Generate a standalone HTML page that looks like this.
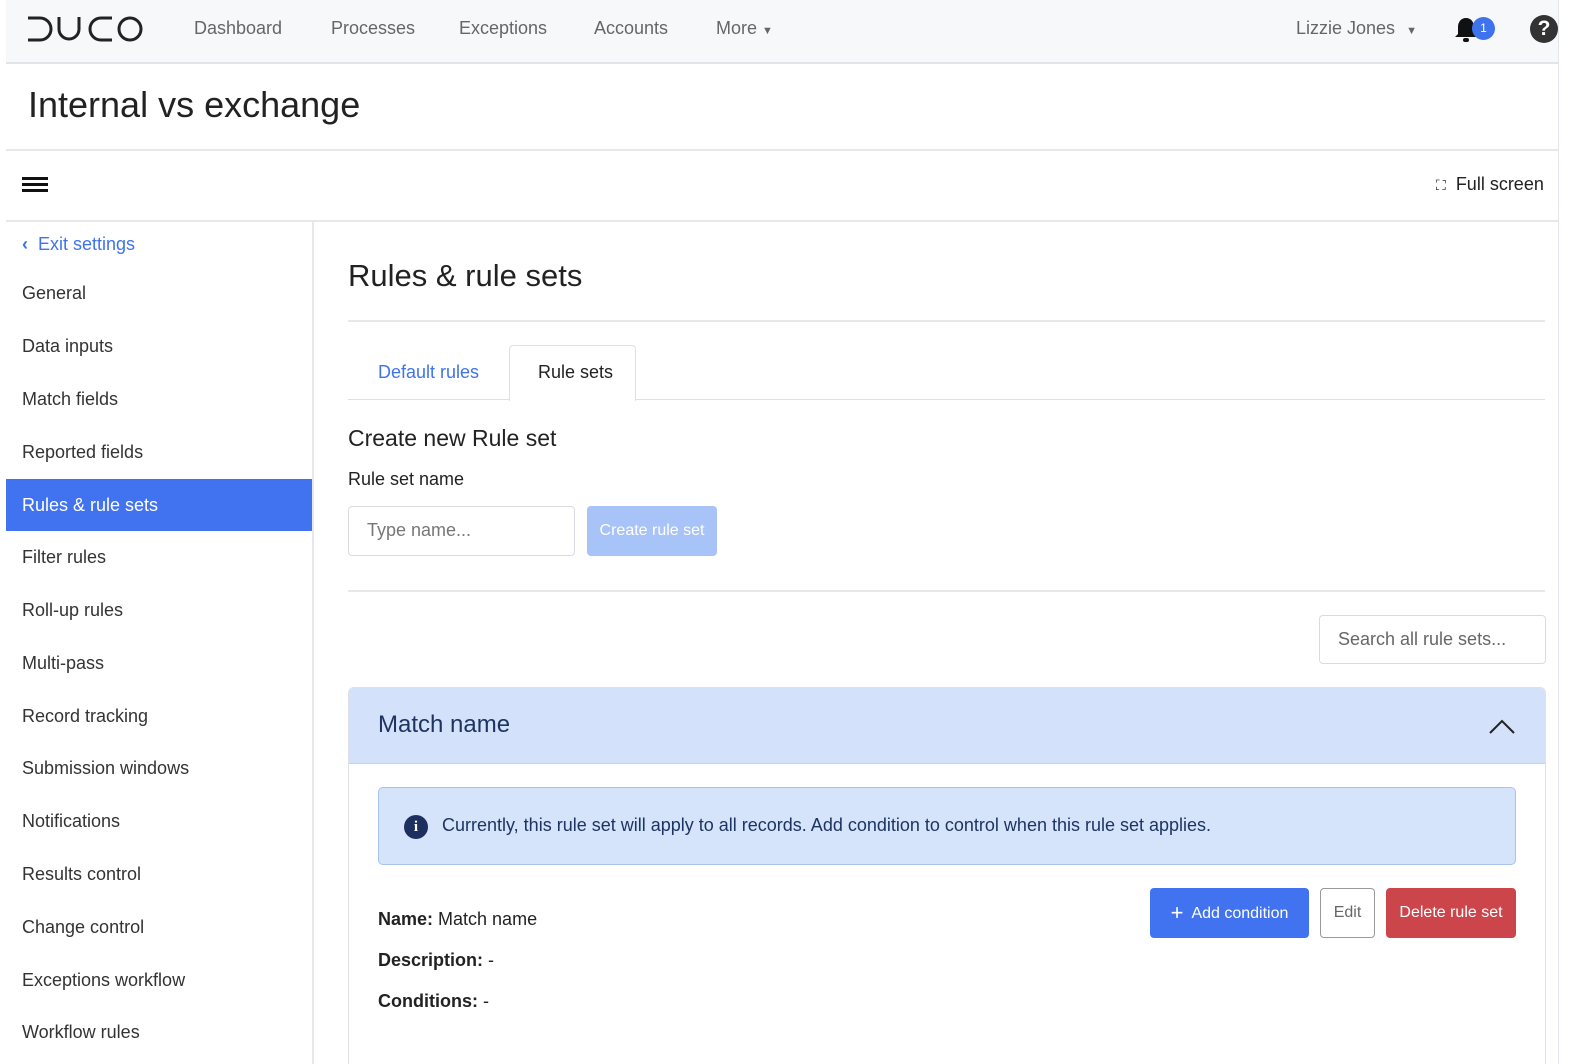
<!DOCTYPE html>
<html><head><meta charset="utf-8"><style>
*{box-sizing:border-box;margin:0;padding:0}
body{width:1574px;height:1064px;overflow:hidden;background:#fff;font-family:"Liberation Sans",sans-serif;color:#333;position:relative}
.a{position:absolute;white-space:nowrap}
.wrap{position:absolute;left:6px;top:0;width:1553px;height:1064px;border-right:1px solid #e3e6ea}
.nav{position:absolute;left:6px;top:0;width:1552px;height:64px;background:#f7f8fa;border-bottom:2px solid #e1e5eb}
.nav .l{position:absolute;top:18px;font-size:18px;color:#666}
.side div.i{position:absolute;left:22px;font-size:18px;color:#333}
.btn{position:absolute;border-radius:4px;font-size:16px;text-align:center;color:#fff}
</style></head><body>
<div class="wrap"></div>
<div class="nav">
 <svg class="a" style="left:20px;top:16px" width="118" height="26" viewBox="0 0 118 26" fill="none" stroke="#222" stroke-width="3">
  <path d="M2 2h12a11 11 0 0 1 0 22H2"/>
  <path d="M33 1v12a10 10 0 0 0 20 0V1"/>
  <path d="M86 2H75a11 11 0 0 0 0 22h11"/>
  <circle cx="104" cy="13" r="11"/>
 </svg>
 <div class="l" style="left:188px">Dashboard</div>
 <div class="l" style="left:325px">Processes</div>
 <div class="l" style="left:453px">Exceptions</div>
 <div class="l" style="left:588px">Accounts</div>
 <div class="l" style="left:710px">More <span style="font-size:11px">▼</span></div>
 <div class="l" style="left:1290px">Lizzie Jones <span style="font-size:11px;margin-left:6px">▼</span></div>
 <svg class="a" style="left:1448px;top:16px" width="24" height="28" viewBox="0 0 24 28"><path d="M12 2c-5 0-8 4-8 9v7l-3 3h22l-3-3v-7c0-5-3-9-8-9z" fill="#111"/><rect x="9" y="22" width="6" height="4" rx="2" fill="#111"/></svg>
 <div class="a" style="left:1466px;top:17px;width:23px;height:23px;border-radius:50%;background:#3f73ee;color:#fff;font-size:12px;text-align:center;line-height:23px">1</div>
 <div class="a" style="left:1524px;top:15px;width:28px;height:28px;border-radius:50%;background:#333;color:#fff;font-size:21px;font-weight:bold;text-align:center;line-height:28px">?</div>
</div>
<div class="a" style="left:28px;top:84px;font-size:36px;color:#222">Internal vs exchange</div>
<div class="a" style="left:6px;top:149px;width:1552px;height:2px;background:#e6e8ec"></div>
<div class="a" style="left:22px;top:177px;width:26px;height:3px;background:#111;box-shadow:0 6px 0 #111,0 12px 0 #111"></div>
<div class="a" style="left:1436px;top:174px;font-size:18px;color:#222"><span style="font-size:14px;margin-right:10px">⛶</span>Full screen</div>
<div class="a" style="left:6px;top:220px;width:1552px;height:2px;background:#e6e8ec"></div>
<div class="a" style="left:312px;top:221px;width:2px;height:843px;background:#e6e8ec"></div>
<div class="side">
 <div class="i" style="top:234px;color:#3f73ee"><span style="font-weight:bold;margin-right:10px">‹</span>Exit settings</div>
 <div class="i" style="top:283px">General</div>
 <div class="i" style="top:336px">Data inputs</div>
 <div class="i" style="top:389px">Match fields</div>
 <div class="i" style="top:442px">Reported fields</div>
 <div class="a" style="left:6px;top:479px;width:306px;height:52px;background:#4173f0"></div>
 <div class="i" style="top:495px;color:#fff">Rules &amp; rule sets</div>
 <div class="i" style="top:547px">Filter rules</div>
 <div class="i" style="top:600px">Roll-up rules</div>
 <div class="i" style="top:653px">Multi-pass</div>
 <div class="i" style="top:706px">Record tracking</div>
 <div class="i" style="top:758px">Submission windows</div>
 <div class="i" style="top:811px">Notifications</div>
 <div class="i" style="top:864px">Results control</div>
 <div class="i" style="top:917px">Change control</div>
 <div class="i" style="top:970px">Exceptions workflow</div>
 <div class="i" style="top:1022px">Workflow rules</div>
</div>
<div class="a" style="left:348px;top:258px;font-size:31px;color:#222">Rules &amp; rule sets</div>
<div class="a" style="left:348px;top:320px;width:1197px;height:2px;background:#e6e8ec"></div>
<div class="a" style="left:348px;top:399px;width:1197px;height:1px;background:#dde0e5"></div>
<div class="a" style="left:509px;top:345px;width:127px;height:56px;background:#fff;border:1px solid #dde0e5;border-bottom:none;border-radius:4px 4px 0 0"></div>
<div class="a" style="left:378px;top:362px;font-size:18px;color:#3f73ee">Default rules</div>
<div class="a" style="left:538px;top:362px;font-size:18px;color:#222">Rule sets</div>
<div class="a" style="left:348px;top:425px;font-size:23px;color:#222">Create new Rule set</div>
<div class="a" style="left:348px;top:469px;font-size:18px;color:#222">Rule set name</div>
<div class="a" style="left:348px;top:506px;width:227px;height:50px;border:1px solid #d8dbe0;border-radius:4px;padding:13px 18px;font-size:18px;color:#777">Type name...</div>
<div class="btn" style="left:587px;top:506px;width:130px;height:50px;background:#a8c3f7;line-height:50px">Create rule set</div>
<div class="a" style="left:348px;top:590px;width:1197px;height:2px;background:#e6e8ec"></div>
<div class="a" style="left:1319px;top:615px;width:227px;height:49px;border:1px solid #d8dbe0;border-radius:4px;padding:13px 18px;font-size:18px;color:#666">Search all rule sets...</div>
<div class="a" style="left:348px;top:687px;width:1198px;height:377px;border:1px solid #dde0e5;border-bottom:none;border-radius:6px 6px 0 0;overflow:hidden">
 <div style="height:76px;background:#d3e1fa;border-bottom:1px solid #c4d4f0"></div>
</div>
<div class="a" style="left:378px;top:711px;font-size:24px;color:#1d3461">Match name</div>
<svg class="a" style="left:1488px;top:718px" width="28" height="18" viewBox="0 0 28 18"><path d="M2 15L14 3l12 12" fill="none" stroke="#222" stroke-width="2"/></svg>
<div class="a" style="left:378px;top:787px;width:1138px;height:78px;background:#d6e4fb;border:1px solid #a9c3f0;border-radius:5px"></div>
<div class="a" style="left:404px;top:815px;width:24px;height:24px;border-radius:50%;background:#1d2f5e;color:#fff;font-weight:bold;font-size:15px;text-align:center;line-height:24px;font-family:'Liberation Serif',serif">i</div>
<div class="a" style="left:442px;top:815px;font-size:18px;color:#1d3461">Currently, this rule set will apply to all records. Add condition to control when this rule set applies.</div>
<div class="a" style="left:378px;top:909px;font-size:18px;color:#222"><b>Name:</b> Match name</div>
<div class="a" style="left:378px;top:950px;font-size:18px;color:#222"><b>Description:</b> -</div>
<div class="a" style="left:378px;top:991px;font-size:18px;color:#222"><b>Conditions:</b> -</div>
<div class="btn" style="left:1150px;top:888px;width:159px;height:50px;background:#4173f0;line-height:50px"><span style="font-size:22px;vertical-align:-2px;margin-right:8px">+</span>Add condition</div>
<div class="btn" style="left:1320px;top:888px;width:55px;height:50px;border:1.5px solid #999;color:#666;line-height:47px">Edit</div>
<div class="btn" style="left:1386px;top:888px;width:130px;height:50px;background:#cc454b;line-height:50px">Delete rule set</div>
</body></html>
